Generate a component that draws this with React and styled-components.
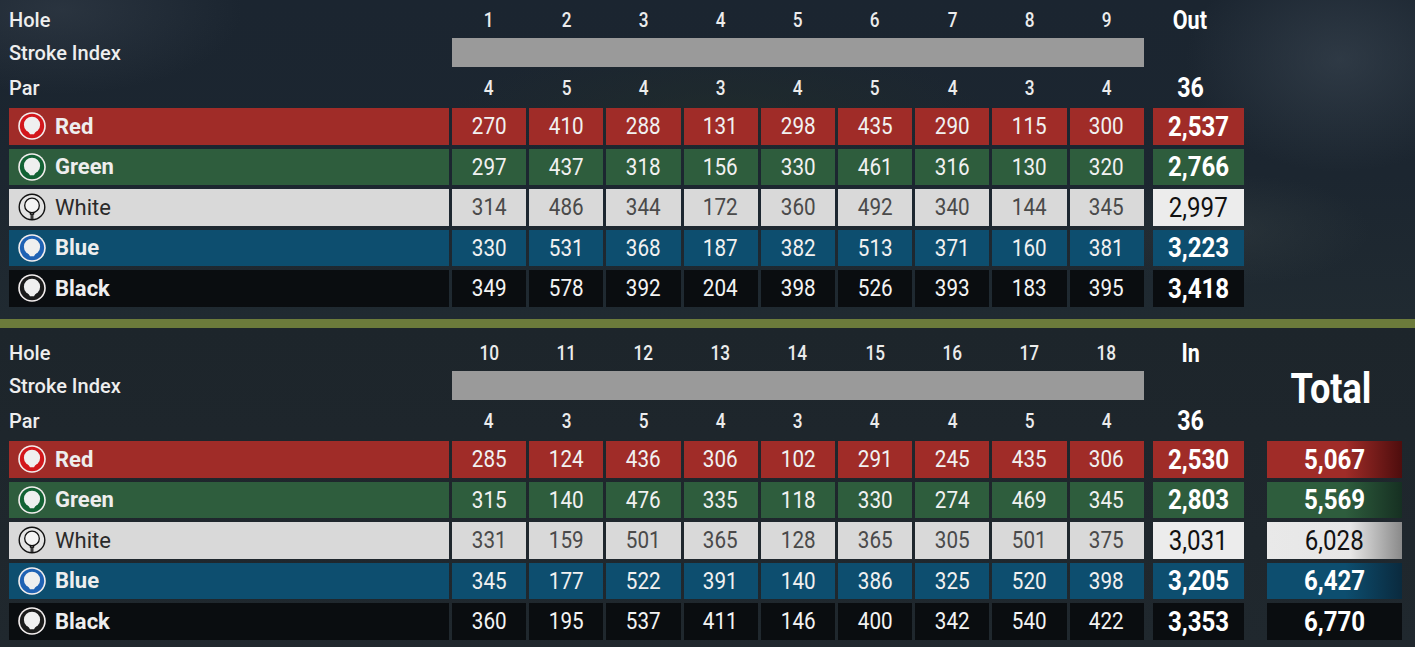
import React from 'react';
import styled, { createGlobalStyle } from 'styled-components';

const GlobalStyle = createGlobalStyle`
  html, body { margin: 0; padding: 0; background: #1f272c; }
  body {
    font-family: Roboto, "Noto Sans", "Liberation Sans", sans-serif;
    width: 1415px; height: 647px; overflow: hidden;
    -webkit-font-smoothing: antialiased;
  }
`;

const TEES = {
  red: { name: 'Red', bg: '#a02c28', ring: '#d3171c', fg: '#f1f1f1', end: '#4e0d0d' },
  green: { name: 'Green', bg: '#2e5d3d', ring: '#136234', fg: '#f1f1f1', end: '#163022' },
  white: { name: 'White', bg: '#d9d9d9', ring: null, fg: '#4a4a4a', end: '#8c8c8c', light: true },
  blue: { name: 'Blue', bg: '#0d4e6f', ring: '#1f62b4', fg: '#f1f1f1', end: '#0a2a3e' },
  black: { name: 'Black', bg: '#0a0d10', ring: '#1b1b1b', fg: '#f3f3f3', end: '#0a0d10' },
};

const FRONT = {
  holes: [1, 2, 3, 4, 5, 6, 7, 8, 9],
  label: 'Out',
  par: [4, 5, 4, 3, 4, 5, 4, 3, 4],
  parTotal: 36,
  rows: {
    red: [[270, 410, 288, 131, 298, 435, 290, 115, 300], '2,537'],
    green: [[297, 437, 318, 156, 330, 461, 316, 130, 320], '2,766'],
    white: [[314, 486, 344, 172, 360, 492, 340, 144, 345], '2,997'],
    blue: [[330, 531, 368, 187, 382, 513, 371, 160, 381], '3,223'],
    black: [[349, 578, 392, 204, 398, 526, 393, 183, 395], '3,418'],
  },
};

const BACK = {
  holes: [10, 11, 12, 13, 14, 15, 16, 17, 18],
  label: 'In',
  par: [4, 3, 5, 4, 3, 4, 4, 5, 4],
  parTotal: 36,
  rows: {
    red: [[285, 124, 436, 306, 102, 291, 245, 435, 306], '2,530', '5,067'],
    green: [[315, 140, 476, 335, 118, 330, 274, 469, 345], '2,803', '5,569'],
    white: [[331, 159, 501, 365, 128, 365, 305, 501, 375], '3,031', '6,028'],
    blue: [[345, 177, 522, 391, 140, 386, 325, 520, 398], '3,205', '6,427'],
    black: [[360, 195, 537, 411, 146, 400, 342, 540, 422], '3,353', '6,770'],
  },
};

const Page = styled.div`
  display: flex;
  flex-direction: column;
  width: 1415px;
  height: 647px;
  background: #1f272c;
`;

const TopSection = styled.section`
  padding: 6px 0 12.5px 9px;
  background:
    radial-gradient(ellipse 220px 160px at 1340px 60px, rgba(62, 74, 86, 0.55), transparent 70%),
    radial-gradient(ellipse 260px 120px at 60px 10px, rgba(60, 70, 82, 0.45), transparent 70%),
    radial-gradient(ellipse 380px 90px at 720px 110px, rgba(34, 46, 42, 0.55), transparent 70%),
    radial-gradient(ellipse 200px 80px at 1230px 230px, rgba(52, 62, 66, 0.45), transparent 70%),
    linear-gradient(180deg, #1b2530 0%, #1c2630 55%, #202a31 100%);
`;

const BottomSection = styled.section`
  padding: 11px 0 0 9px;
  flex: 1;
  background: linear-gradient(180deg, #1d252b 0%, #20282e 100%);
`;

const Divider = styled.div`
  height: 9px;
  background: #6c7b3b;
`;

const Board = styled.div`
  display: grid;
  grid-template-columns: 440px repeat(9, 74.2px) 97px 155px;
  grid-template-rows: 28px 29px 33px repeat(5, 36.5px);
  column-gap: 3px;
  row-gap: 4px;
`;

const Condensed = styled.span`
  display: inline-block;
  transform: scaleX(0.86);
`;

const RowLabel = styled.div`
  grid-column: 1;
  display: flex;
  align-items: center;
  font-size: 20px;
  font-weight: 500;
  color: #eeeeee;
`;

const HeadNum = styled.div`
  display: flex;
  align-items: center;
  justify-content: center;
  font-size: 20px;
  font-weight: 500;
  color: #ececec;
`;

const OutHead = styled.div`
  display: flex;
  align-items: center;
  justify-content: center;
  margin-left: 6px;
  padding-right: 16px;
  font-size: ${(p) => p.$size}px;
  font-weight: 700;
  color: #ffffff;
`;

const SIBar = styled.div`
  grid-column: 2 / span 9;
  background: #9a9a9a;
`;

const NameCell = styled.div`
  grid-column: 1;
  display: flex;
  align-items: center;
  gap: 9px;
  padding-left: 9px;
  background: ${(p) => p.$bg};
  color: ${(p) => (p.$light ? '#2a2a2a' : '#eeeeee')};
  font-size: 22px;
  font-weight: ${(p) => (p.$light ? 400 : 700)};
`;

const ValueCell = styled.div`
  display: flex;
  align-items: center;
  justify-content: center;
  background: ${(p) => p.$bg};
  color: ${(p) => p.$fg};
  font-size: 24px;
  font-weight: 400;
`;

const OutCell = styled.div`
  margin-left: 6px;
  display: flex;
  align-items: center;
  justify-content: center;
  background: ${(p) => (p.$light ? '#ececec' : p.$bg)};
  color: ${(p) => (p.$light ? '#111111' : '#ffffff')};
  font-size: 28px;
  font-weight: ${(p) => (p.$light ? 400 : 700)};
`;

const TotalHead = styled.div`
  grid-column: 12;
  grid-row: 1 / span 3;
  margin-left: 20px;
  padding-right: 6px;
  display: flex;
  align-items: center;
  justify-content: center;
  font-size: 42px;
  font-weight: 700;
  color: #ffffff;
`;

const TotalCell = styled.div`
  grid-column: 12;
  margin-left: 20px;
  display: flex;
  align-items: center;
  justify-content: center;
  background: ${(p) =>
    p.$light
      ? `linear-gradient(90deg, #e9e9e9 0%, #e6e6e6 62%, #8a8a8a 100%)`
      : `linear-gradient(90deg, ${p.$bg} 0%, ${p.$bg} 58%, ${p.$end} 100%)`};
  color: ${(p) => (p.$light ? '#111111' : '#ffffff')};
  font-size: 28px;
  font-weight: ${(p) => (p.$light ? 400 : 700)};
`;

const TeeIcon = ({ ring }) =>
  ring ? (
    <svg width="28" height="28" viewBox="0 0 28 28">
      <circle cx="14" cy="14" r="13.8" fill="#f3eeee" />
      <circle cx="14" cy="14" r="12.2" fill={ring} />
      <circle cx="14" cy="12.8" r="8.1" fill="#efefef" />
      <path d="M9.6 18.2 Q14 21 18.4 18.2 L16 22.2 L12 22.2 Z" fill="#efefef" />
    </svg>
  ) : (
    <svg width="28" height="28" viewBox="0 0 28 28">
      <circle cx="14" cy="14" r="12.8" fill="#e4e4e4" stroke="#111" strokeWidth="1.4" />
      <circle cx="14" cy="12.4" r="7.3" fill="#f4f4f4" stroke="#111" strokeWidth="1.3" />
      <path
        d="M11.4 19.2 L13.2 21.2 L13.2 26 M16.6 19.2 L14.8 21.2 L14.8 26 M11.8 21.2 L16.2 21.2"
        stroke="#111"
        strokeWidth="1.2"
        fill="none"
      />
    </svg>
  );

const Nine = ({ data, withTotal }) => (
  <Board>
    <RowLabel style={{ gridRow: 1 }}>Hole</RowLabel>
    {data.holes.map((h, i) => (
      <HeadNum key={`h${h}`} style={{ gridRow: 1, gridColumn: i + 2 }}>
        <Condensed>{h}</Condensed>
      </HeadNum>
    ))}
    <OutHead $size={25} style={{ gridRow: 1, gridColumn: 11 }}>
      <Condensed>{data.label}</Condensed>
    </OutHead>

    <RowLabel style={{ gridRow: 2 }}>Stroke Index</RowLabel>
    <SIBar style={{ gridRow: 2 }} />

    <RowLabel style={{ gridRow: 3 }}>Par</RowLabel>
    {data.par.map((p, i) => (
      <HeadNum key={`p${i}`} style={{ gridRow: 3, gridColumn: i + 2 }}>
        <Condensed>{p}</Condensed>
      </HeadNum>
    ))}
    <OutHead $size={27} style={{ gridRow: 3, gridColumn: 11 }}>
      <Condensed>{data.parTotal}</Condensed>
    </OutHead>

    {withTotal && (
      <TotalHead>
        <Condensed>Total</Condensed>
      </TotalHead>
    )}

    {Object.keys(TEES).map((key, r) => {
      const tee = TEES[key];
      const [vals, out, total] = data.rows[key];
      const row = r + 4;
      return (
        <React.Fragment key={key}>
          <NameCell $bg={tee.bg} $light={tee.light} style={{ gridRow: row }}>
            <TeeIcon ring={tee.ring} />
            {tee.name}
          </NameCell>
          {vals.map((v, i) => (
            <ValueCell key={i} $bg={tee.bg} $fg={tee.fg} style={{ gridRow: row, gridColumn: i + 2 }}>
              <Condensed>{v}</Condensed>
            </ValueCell>
          ))}
          <OutCell $bg={tee.bg} $light={tee.light} style={{ gridRow: row, gridColumn: 11 }}>
            <Condensed>{out}</Condensed>
          </OutCell>
          {withTotal && (
            <TotalCell $bg={tee.bg} $end={tee.end} $light={tee.light} style={{ gridRow: row }}>
              <Condensed>{total}</Condensed>
            </TotalCell>
          )}
        </React.Fragment>
      );
    })}
  </Board>
);

export default function App() {
  return (
    <>
      <GlobalStyle />
      <Page>
        <TopSection>
          <Nine data={FRONT} />
        </TopSection>
        <Divider />
        <BottomSection>
          <Nine data={BACK} withTotal />
        </BottomSection>
      </Page>
    </>
  );
}
